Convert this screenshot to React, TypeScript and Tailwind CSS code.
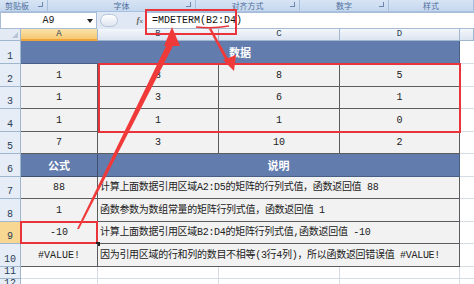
import React from "react";

const MONO = { fontFamily: '"Liberation Mono", "Noto Sans CJK SC", monospace' } as const;
const CJK = { fontFamily: '"Noto Sans CJK SC", "Liberation Sans", sans-serif' } as const;

const COLS = "grid grid-cols-[21px_77px_121px_121px_120px_14px]";

function RowHead({ n, h, active }: { n: string; h: string; active?: boolean }) {
  return (
    <div
      className={`flex items-end justify-center border-r border-b border-[#9eb6ce] text-[10px] leading-none pb-[1px] text-[#2b3d55] ${h} ${
        active ? "bg-[#f8d792]" : "bg-[#e6edf6]"
      }`}
      style={MONO}
    >
      {n}
    </div>
  );
}

function Cell({ children, className = "" }: { children?: React.ReactNode; className?: string }) {
  return (
    <div
      className={`flex items-center justify-center bg-[#f2f2f2] border-r border-b border-[#5c5c5c] text-[10px] text-[#222] ${className}`}
      style={MONO}
    >
      {children}
    </div>
  );
}

function ECell({ className = "" }: { className?: string }) {
  return <div className={`bg-white border-b border-[#d6dce6] ${className}`} />;
}

export default function App() {
  const dataRows = [
    { n: "2", h: "h-[23px]", v: ["1", "3", "8", "5"] },
    { n: "3", h: "h-[22px]", v: ["1", "3", "6", "1"] },
    { n: "4", h: "h-[23px]", v: ["1", "1", "1", "0"] },
    { n: "5", h: "h-[22px]", v: ["7", "3", "10", "2"] },
  ];
  const descRows = [
    { n: "7", h: "h-[22px]", a: "88", d: "计算上面数据引用区域A2:D5的矩阵的行列式值，函数返回值 88" },
    { n: "8", h: "h-[23px]", a: "1", d: "函数参数为数组常量的矩阵行列式值，函数返回值 1" },
    { n: "9", h: "h-[22px]", a: "-10", d: "计算上面数据引用区域B2:D4的矩阵行列式值,函数返回值 -10", active: true },
    { n: "10", h: "h-[23px]", a: "#VALUE!", d: "因为引用区域的行和列的数目不相等(3行4列)，所以函数返回错误值 #VALUE!" },
  ];
  const groups = [
    { w: "w-[48px]", label: "剪贴板", left: true },
    { w: "w-[148px]", label: "字体" },
    { w: "w-[104px]", label: "对齐方式" },
    { w: "w-[89px]", label: "数字" },
    { w: "w-[85px]", label: "样式", noLaunch: true },
  ];

  return (
    <div className="relative w-[474px] h-[284px] overflow-hidden bg-white select-none">
      {/* Ribbon group labels */}
      <div className="flex h-[12px] bg-gradient-to-b from-[#d7e4f4] to-[#c6d8ee] border-b border-[#a9c1e0]">
        {groups.map((g, i) => (
          <div
            key={i}
            className={`relative flex items-center ${g.left ? "justify-start pl-[5px]" : "justify-center"} ${g.w} border-r border-[#a7bfdd] text-[8px] leading-none text-[#4e6f9e]`}
            style={CJK}
          >
            {g.label}
            {!g.noLaunch && (
              <span className="absolute right-[4px] top-[2px] w-[5px] h-[5px] border-r border-b border-[#6b86ad]" />
            )}
          </div>
        ))}
      </div>

      {/* Formula bar */}
      <div className="flex h-[17px] bg-[#dfe8f4] items-stretch">
        <div className="relative flex items-center justify-center w-[97px] bg-white border border-[#a9bcd6] text-[10px] text-[#222]" style={MONO}>
          A9
          <span className="absolute right-[3px] top-[6px] w-0 h-0 border-l-[3px] border-r-[3px] border-t-[4px] border-l-transparent border-r-transparent border-t-[#222]" />
        </div>
        <div className="flex items-center w-[48px] pl-[3px]">
          <div className="w-[18px] h-[13px] rounded-full border border-[#b6c4d6] bg-gradient-to-b from-white to-[#dde5ef]" />
          <div className="ml-auto mr-[2px] text-[9px] italic font-bold text-[#6b6b6b]" style={{ fontFamily: '"Liberation Serif", serif' }}>
            f<span className="text-[7px]">x</span>
          </div>
        </div>
        <div className="flex-1 flex items-center bg-white border-t border-b border-[#a9bcd6] pl-[7px] text-[10px] text-[#111]" style={MONO}>
          =MDETERM(B2:D4)
        </div>
      </div>

      {/* Column headers */}
      <div className={`${COLS} h-[12px]`}>
        <div className="relative bg-[#e3eaf4] border-r border-b border-[#9eb6ce]">
          <svg className="absolute right-[2px] bottom-[2px]" width="6" height="6" viewBox="0 0 6 6">
            <polygon points="6,0 6,6 0,6" fill="#b7c5d6" />
          </svg>
        </div>
        {["A", "B", "C", "D", ""].map((c, i) => (
          <div
            key={i}
            className={`flex items-center justify-center text-[9px] leading-none text-[#2b3d55] border-r border-[#9eb6ce] ${
              i === 0
                ? "bg-gradient-to-b from-[#fbe3aa] to-[#f5c86e] border-b-2 border-b-[#f0a33a]"
                : "bg-gradient-to-b from-[#f4f7fb] to-[#dbe4f0] border-b border-b-[#9eb6ce]"
            }`}
            style={MONO}
          >
            {c}
          </div>
        ))}
      </div>

      {/* Row 1 */}
      <div className={`${COLS} h-[23px]`}>
        <RowHead n="1" h="h-[23px]" />
        <div className="col-span-4 flex items-center justify-center bg-[#627cae] border-r border-b border-[#4a5f86] text-[11px] font-bold text-white" style={CJK}>
          数据
        </div>
        <ECell />
      </div>

      {dataRows.map((r) => (
        <div key={r.n} className={`${COLS} ${r.h}`}>
          <RowHead n={r.n} h={r.h} />
          {r.v.map((v, i) => (
            <Cell key={i}>{v}</Cell>
          ))}
          <ECell />
        </div>
      ))}

      {/* Row 6 */}
      <div className={`${COLS} h-[23px]`}>
        <RowHead n="6" h="h-[23px]" />
        <div className="flex items-center justify-center bg-[#627cae] border-r border-b border-[#3f4f6e] text-[11px] font-bold text-white" style={CJK}>
          公式
        </div>
        <div className="col-span-3 flex items-center justify-center bg-[#627cae] border-r border-b border-[#4a5f86] text-[11px] font-bold text-white" style={CJK}>
          说明
        </div>
        <ECell />
      </div>

      {descRows.map((r) => (
        <div key={r.n} className={`${COLS} ${r.h}`}>
          <RowHead n={r.n} h={r.h} active={r.active} />
          <Cell className="relative">
            {r.a}
            {r.active && (
              <>
                <span className="absolute inset-[-1px] border-2 border-[#e8343a]" />
                <span className="absolute right-[-3px] bottom-[-3px] w-[4px] h-[4px] bg-[#222]" />
              </>
            )}
          </Cell>
          <div className="col-span-3 flex items-center justify-start pl-[2px] bg-[#f2f2f2] border-r border-b border-[#5c5c5c] text-[10px] tracking-[-0.3px] text-[#222] whitespace-nowrap" style={MONO}>
            {r.d}
          </div>
          <ECell />
        </div>
      ))}

      {/* Rows 11-12 */}
      {[
        { n: "11", h: "h-[12px]" },
        { n: "12", h: "h-[12px]" },
      ].map((r) => (
        <div key={r.n} className={`${COLS} ${r.h}`}>
          <RowHead n={r.n} h={r.h} />
          <ECell className="border-r border-r-[#d6dce6]" />
          <ECell className="border-r border-r-[#d6dce6]" />
          <ECell className="border-r border-r-[#d6dce6]" />
          <ECell className="border-r border-r-[#d6dce6]" />
          <ECell />
        </div>
      ))}

      {/* Red highlight boxes */}
      <div className="absolute left-[145px] top-[9px] w-[92px] h-[26px] border-2 border-[#e8343a] pointer-events-none" />
      <div className="absolute left-[98px] top-[63px] w-[363px] h-[70px] border-2 border-[#e8343a] pointer-events-none" />

      {/* Arrows */}
      <svg className="absolute inset-0 pointer-events-none" width="474" height="284" viewBox="0 0 474 284">
        <path d="M196 27 Q212 29 229 26" stroke="#e8343a" strokeWidth="1.5" fill="none" />
        <polygon points="77,229 79,229 175,42 169,40" fill="#f03a3a" />
        <polygon points="172,27 164,46 180,46" fill="#f03a3a" />
        <polygon points="209,29 211,28 230,62 227,63" fill="#f03a3a" />
        <polygon points="234,71 223,60 236,55" fill="#f03a3a" />
      </svg>
    </div>
  );
}
